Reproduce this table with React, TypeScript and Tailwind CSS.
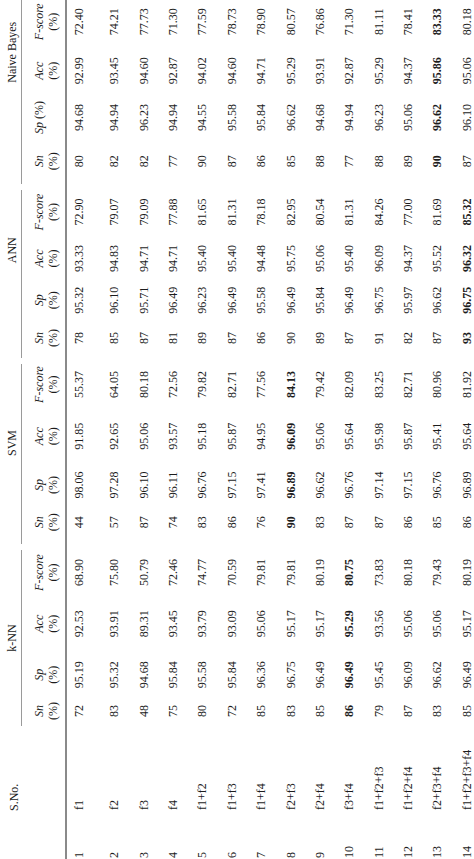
import React from "react";

// the table is printed turned on its side: build it upright, then turn it 90deg to the left
const COLS =
  "grid grid-cols-[47px_83px_36px_43.5px_51.5px_51px_43.5px_42px_50.5px_50px_41px_39.5px_44px_49px_47.5px_45px_48.5px_49.5px]";

// small per-column nudges so the centres sit where the print has them
const shift = [
  "", "pr-[7px]", "", "",
  "pl-[6px]", "pr-[5px]", "", "pl-[3px]",
  "pl-[5px]", "", "", "",
  "pl-[5px]", "", "", "",
];

const groups = [
  { name: "k-NN", pad: "" },
  { name: "SVM", pad: "pl-[22px]" },
  { name: "ANN", pad: "pl-[48px]" },
  { name: "Naive Bayes", pad: "pl-[80px]" },
];

const sub = (nb: boolean) => [
  { t: "Sn", one: false },
  { t: "Sp", one: nb },
  { t: "Acc", one: false },
  { t: "F-score", one: false },
];

const heads = [...sub(false), ...sub(false), ...sub(false), ...sub(true)];

const rows: { n: number; f: string; v: string[] }[] = [
  { n: 1, f: "f1", v: ["72", "95.19", "92.53", "68.90", "44", "98.06", "91.85", "55.37", "78", "95.32", "93.33", "72.90", "80", "94.68", "92.99", "72.40"] },
  { n: 2, f: "f2", v: ["83", "95.32", "93.91", "75.80", "57", "97.28", "92.65", "64.05", "85", "96.10", "94.83", "79.07", "82", "94.94", "93.45", "74.21"] },
  { n: 3, f: "f3", v: ["48", "94.68", "89.31", "50.79", "87", "96.10", "95.06", "80.18", "87", "95.71", "94.71", "79.09", "82", "96.23", "94.60", "77.73"] },
  { n: 4, f: "f4", v: ["75", "95.84", "93.45", "72.46", "74", "96.11", "93.57", "72.56", "81", "96.49", "94.71", "77.88", "77", "94.94", "92.87", "71.30"] },
  { n: 5, f: "f1+f2", v: ["80", "95.58", "93.79", "74.77", "83", "96.76", "95.18", "79.82", "89", "96.23", "95.40", "81.65", "90", "94.55", "94.02", "77.59"] },
  { n: 6, f: "f1+f3", v: ["72", "95.84", "93.09", "70.59", "86", "97.15", "95.87", "82.71", "87", "96.49", "95.40", "81.31", "87", "95.58", "94.60", "78.73"] },
  { n: 7, f: "f1+f4", v: ["85", "96.36", "95.06", "79.81", "76", "97.41", "94.95", "77.56", "86", "95.58", "94.48", "78.18", "86", "95.84", "94.71", "78.90"] },
  { n: 8, f: "f2+f3", v: ["83", "96.75", "95.17", "79.81", "90", "96.89", "96.09", "84.13", "90", "96.49", "95.75", "82.95", "85", "96.62", "95.29", "80.57"] },
  { n: 9, f: "f2+f4", v: ["85", "96.49", "95.17", "80.19", "83", "96.62", "95.06", "79.42", "89", "95.84", "95.06", "80.54", "88", "94.68", "93.91", "76.86"] },
  { n: 10, f: "f3+f4", v: ["86", "96.49", "95.29", "80.75", "87", "96.76", "95.64", "82.09", "87", "96.49", "95.40", "81.31", "77", "94.94", "92.87", "71.30"] },
  { n: 11, f: "f1+f2+f3", v: ["79", "95.45", "93.56", "73.83", "87", "97.14", "95.98", "83.25", "91", "96.75", "96.09", "84.26", "88", "96.23", "95.29", "81.11"] },
  { n: 12, f: "f1+f2+f4", v: ["87", "96.09", "95.06", "80.18", "86", "97.15", "95.87", "82.71", "82", "95.97", "94.37", "77.00", "89", "95.06", "94.37", "78.41"] },
  { n: 13, f: "f2+f3+f4", v: ["83", "96.62", "95.06", "79.43", "85", "96.76", "95.41", "80.96", "87", "96.62", "95.52", "81.69", "90", "96.62", "95.86", "83.33"] },
  { n: 14, f: "f1+f2+f3+f4", v: ["85", "96.49", "95.17", "80.19", "86", "96.89", "95.64", "81.92", "93", "96.75", "96.32", "85.32", "87", "96.10", "95.06", "80.18"] },
];

// which classifier group is best in a row (printed in bold)
const best: Record<number, number> = { 8: 1, 10: 0, 13: 3, 14: 2 };

export default function App() {
  return (
    <div className="w-[474px] h-[859px] overflow-hidden bg-white">
      <div className="w-[862px] h-[474px] origin-top-left -rotate-90 translate-y-[859px] font-['Liberation_Serif',serif] text-[12px] text-[#1c1c1c]">
        <div className={`${COLS} h-[22px] leading-[14px]`}>
          <div />
          <div className="flex items-end pb-[1px] pl-[1px]">S.No.</div>
          {groups.map((g) => (
            <div
              key={g.name}
              className={`col-span-4 mx-[3px] flex items-end justify-center pb-[2px] border-b border-[#9a9a9a] whitespace-nowrap ${g.pad}`}
            >
              {g.name}
            </div>
          ))}
        </div>

        <div className={`${COLS} h-[43px] pt-[10px] leading-[14px]`}>
          <div />
          <div />
          {heads.map((h, i) => (
            <div key={i} className={`flex flex-col items-center whitespace-nowrap ${shift[i]}`}>
              <span>
                <i>{h.t}</i>
                {h.one && " (%)"}
              </span>
              {!h.one && <span>(%)</span>}
            </div>
          ))}
        </div>
        <div className="h-[1.5px] bg-[#8a8a8a]" />

        {rows.map((r) => (
          <div
            key={r.n}
            className={`${COLS} ${r.n === 1 ? "h-[33px] pb-[8px]" : "h-[29.4px]"} leading-[14px]`}
          >
            <div className="flex items-center pl-[1px]">{r.n}</div>
            <div className="flex items-center pl-[2px] whitespace-nowrap">{r.f}</div>
            {r.v.map((x, i) => (
              <div
                key={i}
                className={`flex items-center justify-center whitespace-nowrap ${shift[i]} ${
                  best[r.n] === Math.floor(i / 4) ? "font-bold" : ""
                }`}
              >
                {x}
              </div>
            ))}
          </div>
        ))}
      </div>
    </div>
  );
}
